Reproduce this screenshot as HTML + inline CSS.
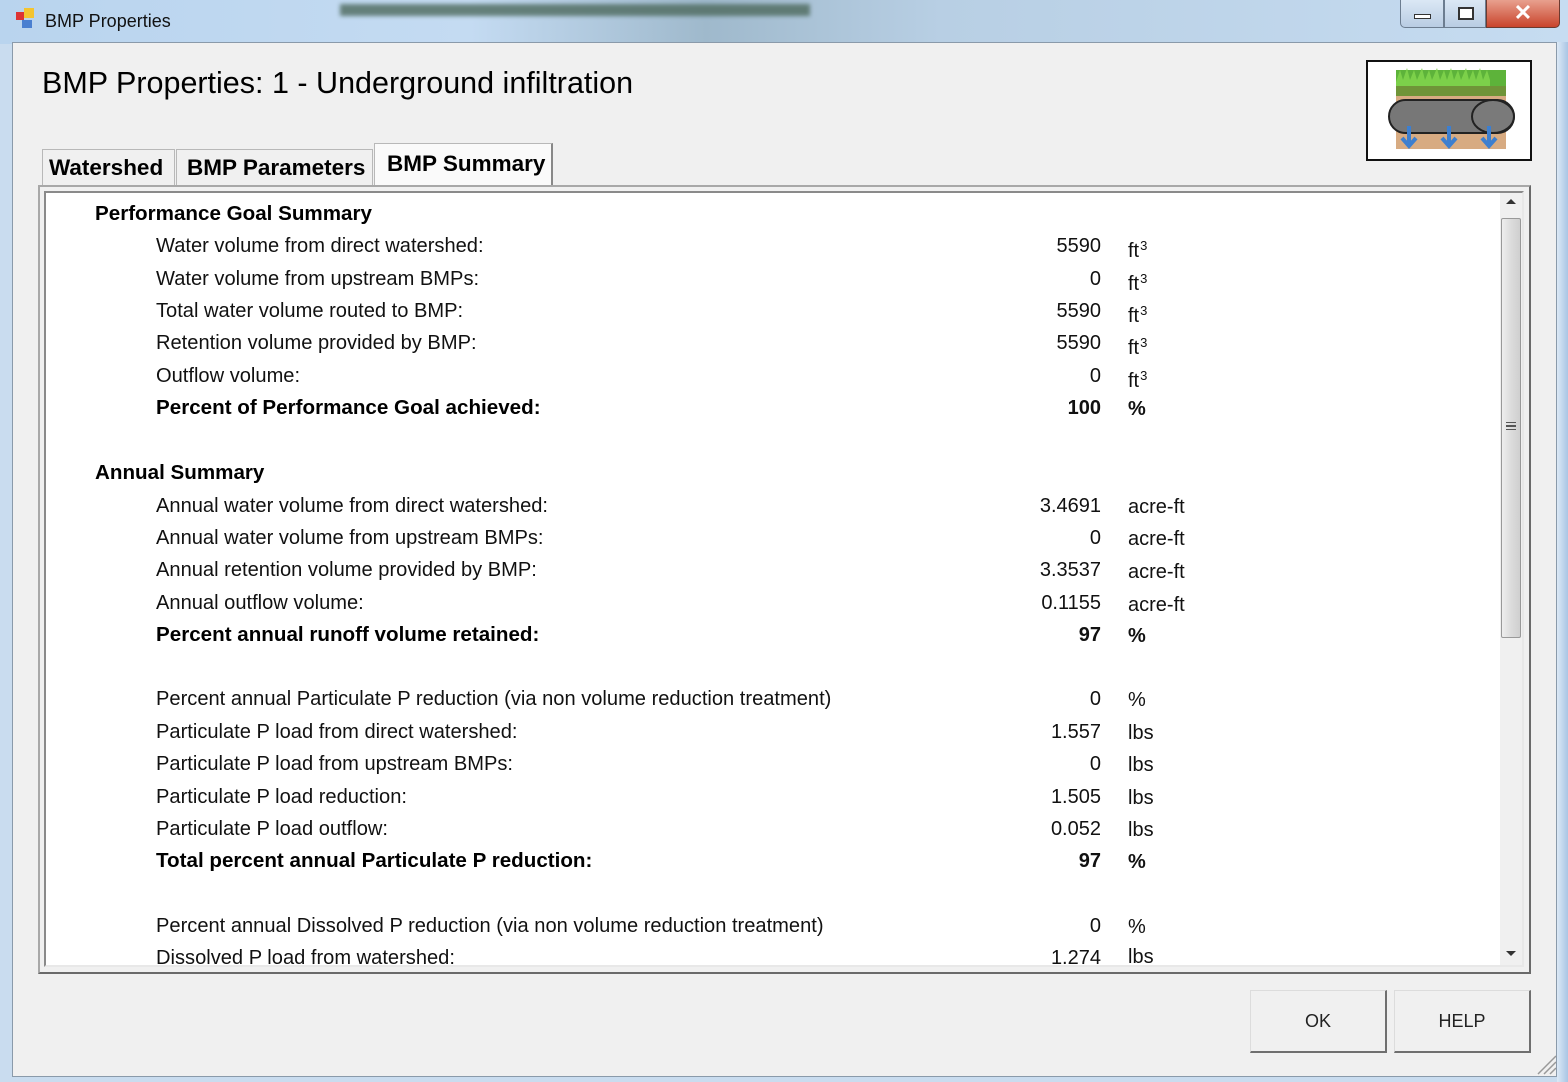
<!DOCTYPE html>
<html><head><meta charset="utf-8"><style>
*{margin:0;padding:0;box-sizing:border-box}
body{width:1568px;height:1082px;overflow:hidden;background:#c9dcef;font-family:"Liberation Sans",sans-serif;position:relative;color:#000}
.titlebar{position:absolute;left:0;top:0;width:1568px;height:44px;background:linear-gradient(90deg,#b9d4ee 0%,#c4dbf2 30%,#9fb9cc 45%,#b8cfe4 60%,#c6dcf1 100%)}
.blurbar{position:absolute;left:340px;top:4px;width:470px;height:12px;background:#4e6a5e;opacity:.8;filter:blur(2px)}
.win{position:absolute;left:12px;top:42px;width:1545px;height:1035px;background:#f0f0f0;border:1px solid #8a9aaa}
.rframe{position:absolute;left:1557px;top:42px;width:11px;height:1040px;background:linear-gradient(90deg,#dce9f6,#a9c5e4)}
.t{position:absolute;white-space:nowrap;font-size:20.1px;line-height:24px;color:#111}
.b{font-weight:bold;font-size:20.6px;color:#000}
.n{position:absolute;white-space:nowrap;font-size:20px;line-height:24px;text-align:right;width:120px;left:981px;color:#111}
.u{position:absolute;white-space:nowrap;font-size:20px;line-height:24px;left:1128px;color:#111}
sup{font-size:13px;vertical-align:7px;margin-left:1px}
.tab{position:absolute;top:147px;height:38px;border:1px solid #b8b8b8;border-bottom:none;background:#f0f0f0;font-weight:bold;font-size:22.5px;line-height:36px;padding-left:6px}
.btn{position:absolute;top:990px;width:137px;height:63px;background:#f0f0f0;border:1px solid #dcdcdc;border-right:2px solid #6f6f6f;border-bottom:2px solid #6f6f6f;font-size:18px;text-align:center;line-height:60px;color:#222}
</style></head><body>
<div class="titlebar"><div class="blurbar"></div></div>
<div style="position:absolute;left:16px;top:12px;width:8px;height:8px;background:#d33"></div>
<div style="position:absolute;left:24px;top:8px;width:10px;height:10px;background:#f4c430"></div>
<div style="position:absolute;left:22px;top:20px;width:10px;height:8px;background:#4a7fd0"></div>
<div class="t" style="left:45px;top:9px;font-size:18px">BMP Properties</div>
<div style="position:absolute;left:1400px;top:0;width:44px;height:28px;border:1px solid #6c7d90;border-top:none;border-radius:0 0 0 5px;background:linear-gradient(#dbe8f5,#b9cde3)"><div style="position:absolute;left:13px;top:14px;width:17px;height:5px;border:1px solid #333;background:#fff"></div></div>
<div style="position:absolute;left:1444px;top:0;width:42px;height:28px;border:1px solid #6c7d90;border-top:none;background:linear-gradient(#dbe8f5,#b9cde3)"><div style="position:absolute;left:13px;top:7px;width:16px;height:13px;border:2px solid #333;background:#fff"></div></div>
<div style="position:absolute;left:1486px;top:0;width:74px;height:28px;border:1px solid #6c3a30;border-top:none;border-radius:0 0 5px 0;background:linear-gradient(#e8a08e,#c9442c);color:#fff;font-weight:bold;font-size:22px;text-align:center;line-height:26px">✕</div>
<div class="rframe"></div>
<div class="win"></div>
<div class="t" style="left:42px;top:66px;font-size:30.5px;line-height:34px;color:#000">BMP Properties: 1 - Underground infiltration</div>
<div style="position:absolute;left:1366px;top:60px;width:166px;height:101px;background:#fff;border:2px solid #111">
<svg width="162" height="97" viewBox="0 0 162 97">
<rect x="28" y="8" width="110" height="18" fill="#5db33a"/>
<path d="M28 20 l4 -12 l3 10 l4 -12 l3 12 l4 -10 l3 10 l5 -12 l3 12 l4 -10 l3 10 l5 -12 l3 12 l4 -10 l3 10 l4 -12 l3 12 l4 -10 l3 10 l5 -12 l3 12 l4 -10 l3 10 l4 -12 l3 12 l4 -10 l3 10 V26 H28z" fill="#7cd04a"/>
<rect x="28" y="24" width="110" height="10" fill="#6f9438"/>
<rect x="28" y="34" width="110" height="53" fill="#d7ab82"/>
<rect x="21" y="38" width="125" height="33" rx="16.5" fill="#777" stroke="#222" stroke-width="2"/>
<ellipse cx="125" cy="54.5" rx="21" ry="16.5" fill="#7a7a7a" stroke="#222" stroke-width="2"/>
<g stroke="#3d7fcf" stroke-width="4" fill="none"><path d="M41 64v20M34 76l7 8 7-8M81 64v20M74 76l7 8 7-8M121 64v20M114 76l7 8 7-8"/></g>
</svg></div>
<div class="tab" style="left:42px;width:133px;top:149px">Watershed</div>
<div class="tab" style="left:176px;width:197px;top:149px;padding-left:10px">BMP Parameters</div>
<div class="tab" style="left:374px;width:179px;top:143px;height:44px;background:#fafafa;padding-left:12px;line-height:40px;border-right:2px solid #888">BMP Summary</div>
<div style="position:absolute;left:38px;top:185px;width:1493px;height:789px;border:2px solid #a8a8a8;border-right-color:#6a6a6a;border-bottom-color:#6a6a6a;background:#f0f0f0"></div>
<div style="position:absolute;left:44px;top:191px;width:1480px;height:776px;border:2px solid #8a8a8a;border-right-color:#e8e8e8;border-bottom-color:#e8e8e8;background:#fff;overflow:hidden">
<div style="position:absolute;left:1454px;top:0;width:22px;height:772px;background:#f0f0f0"></div>
<div style="position:absolute;left:1455px;top:25px;width:20px;height:420px;border:1px solid #999;border-radius:2px;background:linear-gradient(90deg,#eee,#dcdcdc,#cfcfcf)"></div>
<div style="position:absolute;left:1460px;top:6px;width:0;height:0;border:5px solid transparent;border-bottom:5px solid #333;border-top:none"></div>
<div style="position:absolute;left:1460px;top:758px;width:0;height:0;border:5px solid transparent;border-top:5px solid #333;border-bottom:none"></div>
<div style="position:absolute;left:1460px;top:229px;width:10px;height:8px;border-top:1px solid #555;border-bottom:1px solid #555"><div style="margin-top:2px;border-top:1px solid #555;height:2px;border-bottom:1px solid #555"></div></div>
</div>
<div class="t b" style="left:95px;top:202px">Performance Goal Summary</div>
<div class="t" style="left:156px;top:234px">Water volume from direct watershed:</div><div class="n" style="top:234px">5590</div><div class="u" style="top:234px">ft<sup>3</sup></div>
<div class="t" style="left:156px;top:267px">Water volume from upstream BMPs:</div><div class="n" style="top:267px">0</div><div class="u" style="top:267px">ft<sup>3</sup></div>
<div class="t" style="left:156px;top:299px">Total water volume routed to BMP:</div><div class="n" style="top:299px">5590</div><div class="u" style="top:299px">ft<sup>3</sup></div>
<div class="t" style="left:156px;top:331px">Retention volume provided by BMP:</div><div class="n" style="top:331px">5590</div><div class="u" style="top:331px">ft<sup>3</sup></div>
<div class="t" style="left:156px;top:364px">Outflow volume:</div><div class="n" style="top:364px">0</div><div class="u" style="top:364px">ft<sup>3</sup></div>
<div class="t b" style="left:156px;top:396px">Percent of Performance Goal achieved:</div><div class="n b" style="top:396px">100</div><div class="u b" style="top:397px">%</div>
<div class="t b" style="left:95px;top:461px">Annual Summary</div>
<div class="t" style="left:156px;top:494px">Annual water volume from direct watershed:</div><div class="n" style="top:494px">3.4691</div><div class="u" style="top:495px">acre-ft</div>
<div class="t" style="left:156px;top:526px">Annual water volume from upstream BMPs:</div><div class="n" style="top:526px">0</div><div class="u" style="top:527px">acre-ft</div>
<div class="t" style="left:156px;top:558px">Annual retention volume provided by BMP:</div><div class="n" style="top:558px">3.3537</div><div class="u" style="top:560px">acre-ft</div>
<div class="t" style="left:156px;top:591px">Annual outflow volume:</div><div class="n" style="top:591px">0.1155</div><div class="u" style="top:593px">acre-ft</div>
<div class="t b" style="left:156px;top:623px">Percent annual runoff volume retained:</div><div class="n b" style="top:623px">97</div><div class="u b" style="top:624px">%</div>
<div class="t" style="left:156px;top:687px">Percent annual Particulate P reduction (via non volume reduction treatment)</div><div class="n" style="top:687px">0</div><div class="u" style="top:688px">%</div>
<div class="t" style="left:156px;top:720px">Particulate P load from direct watershed:</div><div class="n" style="top:720px">1.557</div><div class="u" style="top:721px">lbs</div>
<div class="t" style="left:156px;top:752px">Particulate P load from upstream BMPs:</div><div class="n" style="top:752px">0</div><div class="u" style="top:753px">lbs</div>
<div class="t" style="left:156px;top:785px">Particulate P load reduction:</div><div class="n" style="top:785px">1.505</div><div class="u" style="top:786px">lbs</div>
<div class="t" style="left:156px;top:817px">Particulate P load outflow:</div><div class="n" style="top:817px">0.052</div><div class="u" style="top:818px">lbs</div>
<div class="t b" style="left:156px;top:849px">Total percent annual Particulate P reduction:</div><div class="n b" style="top:849px">97</div><div class="u b" style="top:850px">%</div>
<div class="t" style="left:156px;top:914px">Percent annual Dissolved P reduction (via non volume reduction treatment)</div><div class="n" style="top:914px">0</div><div class="u" style="top:915px">%</div>
<div style="position:absolute;left:46px;top:945px;width:1452px;height:20px;overflow:hidden">
<div class="t" style="left:110px;top:1px">Dissolved P load from watershed:</div><div class="n" style="left:935px;top:1px">1.274</div><div class="u" style="left:1082px;top:0px">lbs</div></div>
<div class="btn" style="left:1250px">OK</div>
<div class="btn" style="left:1394px">HELP</div>
<svg style="position:absolute;left:1536px;top:1052px" width="22" height="24"><g stroke="#999" stroke-width="1.5"><path d="M20 4L2 22M20 10L8 22M20 16L14 22"/></g></svg>
</body></html>
